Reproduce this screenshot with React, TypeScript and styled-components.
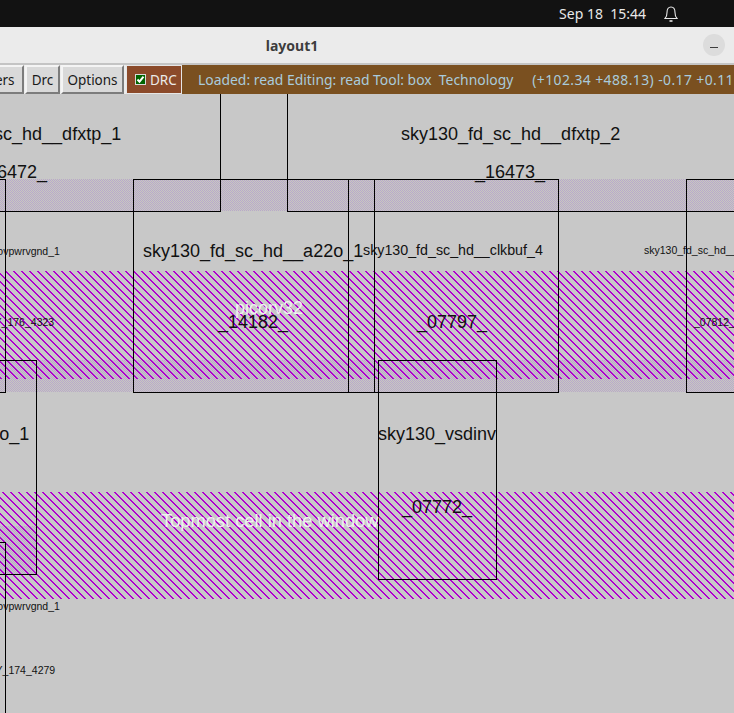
import React from 'react';
import styled, { createGlobalStyle } from 'styled-components';

const GlobalStyle = createGlobalStyle`
  html, body {
    margin: 0;
    padding: 0;
    background: #c8c8c8;
    overflow: hidden;
  }
`;

const Page = styled.div`
  width: 734px;
  height: 713px;
  display: flex;
  flex-direction: column;
  overflow: hidden;
  font-family: 'Noto Sans', sans-serif;
`;

const TopBar = styled.div`
  height: 27px;
  flex: none;
  background: #121212;
  color: #e8e8e8;
  display: flex;
  align-items: center;
  justify-content: flex-end;
  gap: 18px;
  padding-right: 56px;
  font-size: 14px;
`;

const Clock = styled.span`
  white-space: pre;
`;

const TitleBar = styled.div`
  height: 36px;
  flex: none;
  background: #ebebeb;
  border-bottom: 2px solid #c4c4c4;
  position: relative;
  display: flex;
  align-items: center;
  justify-content: center;
  font-size: 14px;
  font-weight: 700;
  color: #3d3d3d;
`;

const TitleText = styled.span`
  margin-right: 150px;
`;

const MinimizeButton = styled.div`
  position: absolute;
  right: 9px;
  top: 7px;
  width: 22px;
  height: 22px;
  border-radius: 50%;
  background: #dcdcdc;

  &::after {
    content: '';
    position: absolute;
    left: 7px;
    top: 13px;
    width: 8px;
    height: 1px;
    background: #3d3d3d;
  }
`;

const Toolbar = styled.div`
  height: 29px;
  flex: none;
  display: flex;
  align-items: stretch;
  background: #ececec;
  overflow: hidden;
  font-size: 13.5px;
`;

const ToolButton = styled.div<{ $w: number; $cut?: number }>`
  box-sizing: border-box;
  flex: none;
  width: ${(p) => p.$w}px;
  height: 29px;
  margin-right: 1px;
  margin-left: ${(p) => (p.$cut ? `-${p.$cut}px` : '0')};
  display: flex;
  align-items: center;
  justify-content: center;
  background: #d9d9d9;
  color: #1a1a1a;
  border: 2px solid;
  border-color: #f4f4f4 #7c7c7c #7c7c7c #f4f4f4;
  white-space: nowrap;
`;

const DrcToggle = styled.div`
  box-sizing: border-box;
  width: 56px;
  height: 29px;
  margin-left: 1px;
  display: flex;
  align-items: center;
  gap: 4px;
  padding-left: 8px;
  flex: none;
  background: #8b4a2a;
  color: #ebebeb;
  border: 1px solid #e6e6e6;
`;

const CheckMark = styled.span`
  box-sizing: border-box;
  width: 11px;
  height: 11px;
  flex: none;
  background: #006400;
  border: 1px solid #d8d8d8;
  display: flex;
`;

const StatusBar = styled.div`
  flex: 1;
  min-width: 0;
  height: 29px;
  background: #7a5020;
  color: #a9cbdc;
  font-size: 13.9px;
  padding-left: 16px;
  display: flex;
  align-items: center;
  white-space: pre;
  overflow: hidden;
`;

const Coordinates = styled.span`
  margin-left: 19px;
  letter-spacing: 0.42px;
`;

const Canvas = styled.div`
  position: relative;
  flex: 1;
  background: #c8c8c8;
  overflow: hidden;
`;

const Layers = styled.svg`
  position: absolute;
  left: 0;
  top: 0;
  display: block;
`;

/* layout cells: their place on the canvas is the content, y is page based */
const Cell = styled.div<{ $x: number; $y: number; $w: number; $h: number }>`
  position: absolute;
  box-sizing: border-box;
  left: ${(p) => p.$x}px;
  top: ${(p) => p.$y - 94}px;
  width: ${(p) => p.$w}px;
  height: ${(p) => p.$h}px;
  border: 1px solid #000;
`;

const Wire = styled.div<{ $x: number; $y: number; $w: number; $h: number }>`
  position: absolute;
  left: ${(p) => p.$x}px;
  top: ${(p) => p.$y - 94}px;
  width: ${(p) => p.$w}px;
  height: ${(p) => p.$h}px;
  background: #000;
`;

const Label = styled.span<{ $x: number; $y: number; $size: number; $white?: boolean }>`
  position: absolute;
  left: ${(p) => p.$x}px;
  top: ${(p) => p.$y - 94}px;
  transform: translateY(-50%);
  font-family: 'Liberation Sans', Arial, sans-serif;
  font-size: ${(p) => p.$size}px;
  line-height: 1;
  white-space: nowrap;
  color: ${(p) => (p.$white ? '#f0f0f0' : '#111')};
`;

const cells = [
  { x: -120, y: 179, w: 126, h: 214 },
  { x: 133, y: 179, w: 242, h: 214 },
  { x: 348, y: 179, w: 211, h: 214 },
  { x: 686, y: 179, w: 120, h: 214 },
  { x: -120, y: 360, w: 157, h: 215 },
  { x: 378, y: 360, w: 119, h: 220 },
  { x: -120, y: 542, w: 126, h: 240 },
];

const wires = [
  { x: 220, y: 94, w: 1, h: 118 },
  { x: 287, y: 94, w: 1, h: 118 },
  { x: 0, y: 211, w: 221, h: 1 },
  { x: 287, y: 211, w: 447, h: 1 },
];

const labels = [
  { t: 'sky130_fd_sc_hd__dfxtp_1', x: -98, y: 134, s: 18 },
  { t: '_16472_', x: -23, y: 172, s: 18 },
  { t: 'sky130_fd_sc_hd__dfxtp_2', x: 401, y: 134, s: 18 },
  { t: '_16473_', x: 475, y: 172, s: 18 },
  { t: 'sky130_fd_sc_hd__a22o_1', x: 143, y: 251, s: 18 },
  { t: 'sky130_fd_sc_hd__clkbuf_4', x: 363, y: 250, s: 14.25 },
  { t: 'sky130_fd_sc_hd__', x: 644, y: 250, s: 10.5 },
  { t: 'sky130_ef_sc_hd__decap_12_ovpwrvgnd_1', x: -148, y: 251, s: 10.5 },
  { t: 'picorv32', x: 235, y: 308, s: 18, white: true },
  { t: '_14182_', x: 218, y: 322, s: 18 },
  { t: '_07797_', x: 417, y: 322, s: 18 },
  { t: '_07812_', x: 694, y: 322, s: 10.5 },
  { t: 'PHY_176_4323', x: -20, y: 322, s: 10.5 },
  { t: 'sky130_fd_sc_hd__a22o_1', x: -191, y: 434, s: 18 },
  { t: 'sky130_vsdinv', x: 378, y: 434, s: 18 },
  { t: '_07772_', x: 402, y: 507, s: 18 },
  { t: 'Topmost cell in the window', x: 161, y: 521, s: 18.3, white: true },
  { t: 'sky130_ef_sc_hd__decap_12_ovpwrvgnd_1', x: -148, y: 606, s: 10.5 },
  { t: 'PHY_174_4279', x: -19, y: 670, s: 10.5 },
];

// one staircase row per pixel, so the hatch stays on whole pixels like the tool draws it
const hatchPath = (top: number, bottom: number) => {
  let d = '';
  for (let y = top; y < bottom; y++) {
    for (let x = ((y + 6) % 8) - 8; x < 734; x += 8) {
      d += `M${x} ${y}h2v1h-2z`;
    }
  }
  return d;
};

const hatch = hatchPath(271, 379) + hatchPath(492, 599);

const App: React.FC = () => (
  <Page>
    <GlobalStyle />
    <TopBar>
      <Clock>Sep 18  15:44</Clock>
      <svg width="14" height="16" viewBox="0 0 14 16" fill="none" stroke="#e8e8e8" strokeWidth="1.1">
        <path d="M1 12.500c1.600-1.400 2-3 2-6C3 3 4.600 1 7 1s4 2 4 5.500c0 3 .4 4.600 2 6z" />
        <path d="M5.500 15h3" strokeWidth="1.600" />
      </svg>
    </TopBar>
    <TitleBar>
      <TitleText>layout1</TitleText>
      <MinimizeButton />
    </TitleBar>
    <Toolbar>
      <ToolButton $w={60} $cut={36}>Layers</ToolButton>
      <ToolButton $w={35}>Drc</ToolButton>
      <ToolButton $w={63}>Options</ToolButton>
      <DrcToggle>
        <CheckMark>
          <svg width="9" height="9" viewBox="0 0 9 9" fill="none" stroke="#fff" strokeWidth="2">
            <path d="M1.500 4.500l2 2.200 4-5" />
          </svg>
        </CheckMark>
        DRC
      </DrcToggle>
      <StatusBar>
        Loaded: read Editing: read Tool: box  Technology
        <Coordinates>(+102.34 +488.13) -0.17 +0.11</Coordinates>
      </StatusBar>
    </Toolbar>
    <Canvas>
      <Layers width="734" height="619" viewBox="0 94 734 619" shapeRendering="crispEdges">
        <defs>
          <pattern id="stipple" width="2" height="2" patternUnits="userSpaceOnUse">
            <rect width="2" height="2" fill="#c8c8c0" />
            <rect width="1" height="1" fill="#b8a8cc" />
            <rect x="1" y="1" width="1" height="1" fill="#b8a8cc" />
          </pattern>
        </defs>
        <rect x="0" y="179" width="734" height="32" fill="url(#stipple)" />
        <rect x="0" y="360" width="734" height="32" fill="url(#stipple)" />
        <rect x="0" y="526" width="36" height="48" fill="url(#stipple)" />
        <path d={hatch} fill="#b000d0" />
      </Layers>
      {cells.map((c, i) => (
        <Cell key={i} $x={c.x} $y={c.y} $w={c.w} $h={c.h} />
      ))}
      {wires.map((w, i) => (
        <Wire key={i} $x={w.x} $y={w.y} $w={w.w} $h={w.h} />
      ))}
      {labels.map((l, i) => (
        <Label key={i} $x={l.x} $y={l.y} $size={l.s} $white={l.white}>
          {l.t}
        </Label>
      ))}
    </Canvas>
  </Page>
);

export default App;
